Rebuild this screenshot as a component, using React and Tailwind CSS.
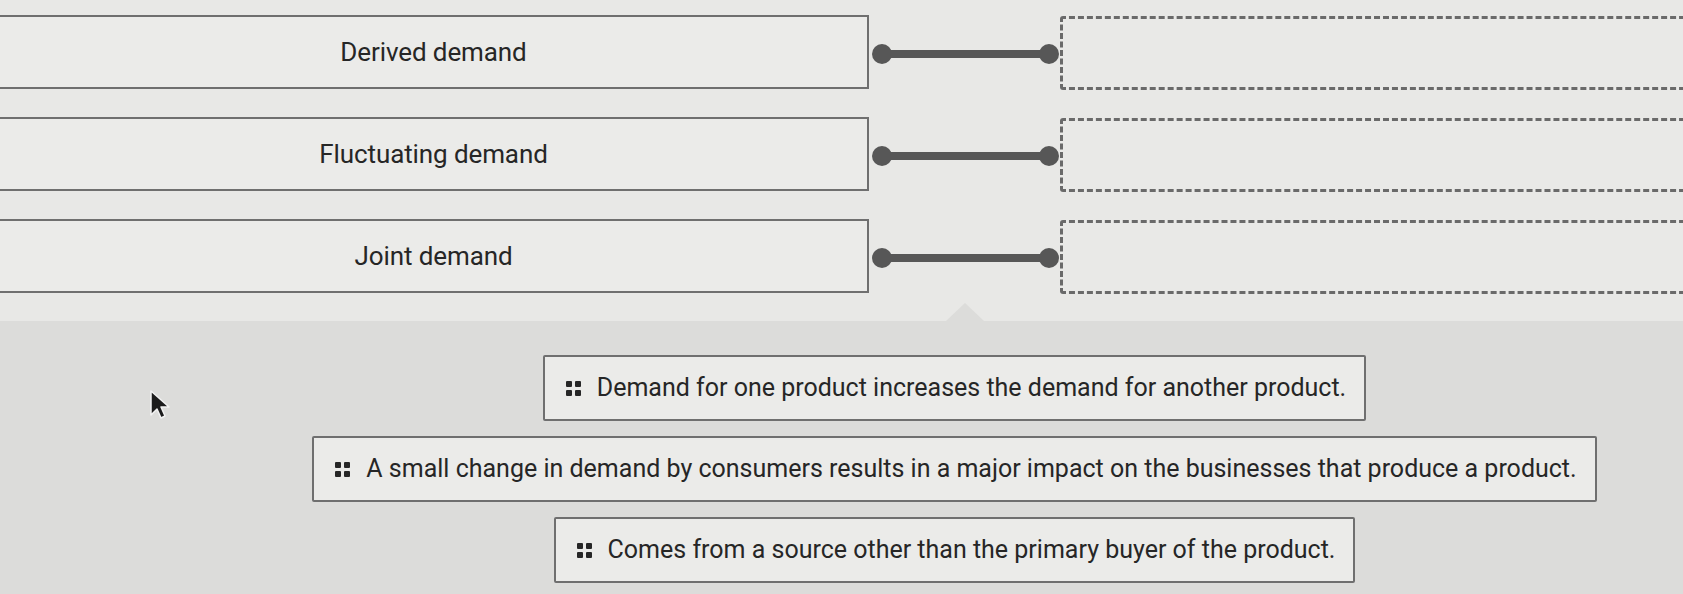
const rows = ['Derived demand', 'Fluctuating demand', 'Joint demand']
const choices = [
  'Demand for one product increases the demand for another product.',
  'A small change in demand by consumers results in a major impact on the businesses that produce a product.',
  'Comes from a source other than the primary buyer of the product.',
]

function Grip() {
  return (
    <span className="grid grid-cols-2 gap-[3px] shrink-0">
      <span className="w-[6px] h-[6px] rounded-[1px] bg-[#262626]" />
      <span className="w-[6px] h-[6px] rounded-[1px] bg-[#262626]" />
      <span className="w-[6px] h-[6px] rounded-[1px] bg-[#262626]" />
      <span className="w-[6px] h-[6px] rounded-[1px] bg-[#262626]" />
    </span>
  )
}

function Connector() {
  return (
    <div className="flex items-center w-[191px] pl-[3px] pr-[1px] mt-[3px]">
      <span className="w-[20px] h-[20px] rounded-full bg-[#575757] shrink-0" />
      <span className="flex-1 h-[8px] bg-[#575757] -mx-[2px]" />
      <span className="w-[20px] h-[20px] rounded-full bg-[#575757] shrink-0" />
    </div>
  )
}

export default function App() {
  return (
    <div className="relative w-[1683px] h-[594px] overflow-hidden bg-[#e8e8e6] font-['Roboto',sans-serif] text-[#262626]">
      {/* matching rows */}
      <div className="flex flex-col gap-[26px] pt-[14px] h-[321px]">
        {rows.map((label) => (
          <div key={label} className="flex items-center">
            <div className="w-[869px] h-[74px] shrink-0 flex items-center justify-center border-2 border-l-0 border-[#6f6f6f] bg-[#ebebe9] text-[26px] tracking-[-0.1px]">
              {label}
            </div>
            <Connector />
            <div className="flex-1 h-[74px] mt-[2px] -mr-[20px] border-[3px] border-dashed border-[#6a6a6a] rounded-[3px] bg-[#e9e9e7]" />
          </div>
        ))}
      </div>

      {/* choices tray */}
      <div className="relative bg-[#dcdcda] h-[273px] flex flex-col items-center gap-[15px] pt-[34px] pl-[226px]">
        <span className="absolute left-[946px] -top-[18px] w-0 h-0 border-x-[19px] border-x-transparent border-b-[18px] border-b-[#dcdcda]" />
        {choices.map((c) => (
          <div
            key={c}
            className="h-[66px] flex items-center gap-[16px] pl-[21px] pr-[18px] border-2 border-[#6f6f6f] rounded-[2px] bg-[#ebebe9] text-[25px] whitespace-nowrap"
          >
            <Grip />
            <span>{c}</span>
          </div>
        ))}

        {/* mouse pointer */}
        <svg className="absolute left-[149px] top-[68px]" width="22" height="32" viewBox="0 0 22 32">
          <path d="M2 2 L2 26 L8 20 L12 29 L16 27 L12 18 L20 18 Z" fill="#1c1c1c" stroke="#f2f2f2" strokeWidth="1.5" strokeLinejoin="round" />
        </svg>
      </div>
    </div>
  )
}
